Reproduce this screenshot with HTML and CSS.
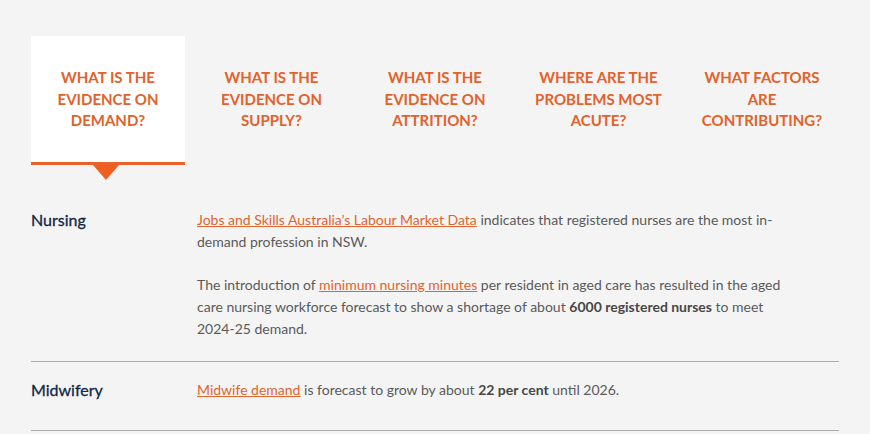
FILE: index.html
```html
<!DOCTYPE html>
<html lang="en">
<head>
  <meta charset="UTF-8" />
  <title>Workforce evidence</title>
  <link rel="stylesheet" href="styles.css">
</head>
<body>

<div class="page">
  <nav class="tabs">
    <a class="tab active" href="#">What is the evidence on demand?</a>
    <a class="tab" href="#">What is the evidence on supply?</a>
    <a class="tab" href="#">What is the evidence on attrition?</a>
    <a class="tab" href="#">Where are the problems most acute?</a>
    <a class="tab" href="#">What factors are contributing?</a>
  </nav>

  <div class="rows">
    <div class="row">
      <h3 class="label">Nursing</h3>
      <div class="content">
        <p><a href="#">Jobs and Skills Australia’s Labour Market Data</a> indicates that registered nurses are the most in-demand profession in NSW.</p>
        <p>The introduction of <a href="#">minimum nursing minutes</a> per resident in aged care has resulted in the aged care nursing workforce forecast to show a shortage of about <strong>6000 registered nurses</strong> to meet 2024-25 demand.</p>
      </div>
    </div>
    <div class="row">
      <h3 class="label">Midwifery</h3>
      <div class="content">
        <p><a href="#">Midwife demand</a> is forecast to grow by about <strong>22 per cent</strong> until 2026.</p>
      </div>
    </div>
  </div>
</div>

</body>
</html>
```

FILE: styles.css
```css
* { box-sizing: border-box; }
body {
  margin: 0;
  background: #f4f4f4;
  font-family: Lato, sans-serif;
  color: #5a5a5a;
}
.page {
  width: 870px;
  padding: 36px 31px 0 31px;
}
.tabs {
  display: flex;
  justify-content: space-between;
}
.tab {
  position: relative;
  width: 154px;
  height: 129px;
  padding: 31px 12px 0;
  border-bottom: 3px solid transparent;
  text-align: center;
  text-decoration: none;
  text-transform: uppercase;
  font-size: 15px;
  line-height: 21.5px;
  font-weight: bold;
  color: #e2622b;
}
.tab.active {
  background: #fff;
  border-bottom-color: #e8622a;
}
.tab.active::after {
  content: "";
  position: absolute;
  left: 50%;
  bottom: -18px;
  margin-left: -15px;
  border-left: 13px solid transparent;
  border-right: 13px solid transparent;
  border-top: 15px solid #f05f22;
}
.rows {
  margin-top: 27px;
}
.row {
  display: grid;
  grid-template-columns: 166px 600px;
  min-height: 69px;
  padding: 17px 0 21px;
  border-bottom: 1px solid #aaa;
}
.label {
  margin: 0;
  font-size: 16px;
  line-height: 22px;
  font-weight: normal;
  color: #0f2747;
  -webkit-text-stroke: 0.3px #0f2747;
}
.content p {
  margin: 0 0 21px;
  font-size: 14px;
  line-height: 22px;
}
.content p:last-child {
  margin-bottom: 0;
}
.content a {
  color: #e0642e;
}
.content strong {
  color: #474747;
}
```
